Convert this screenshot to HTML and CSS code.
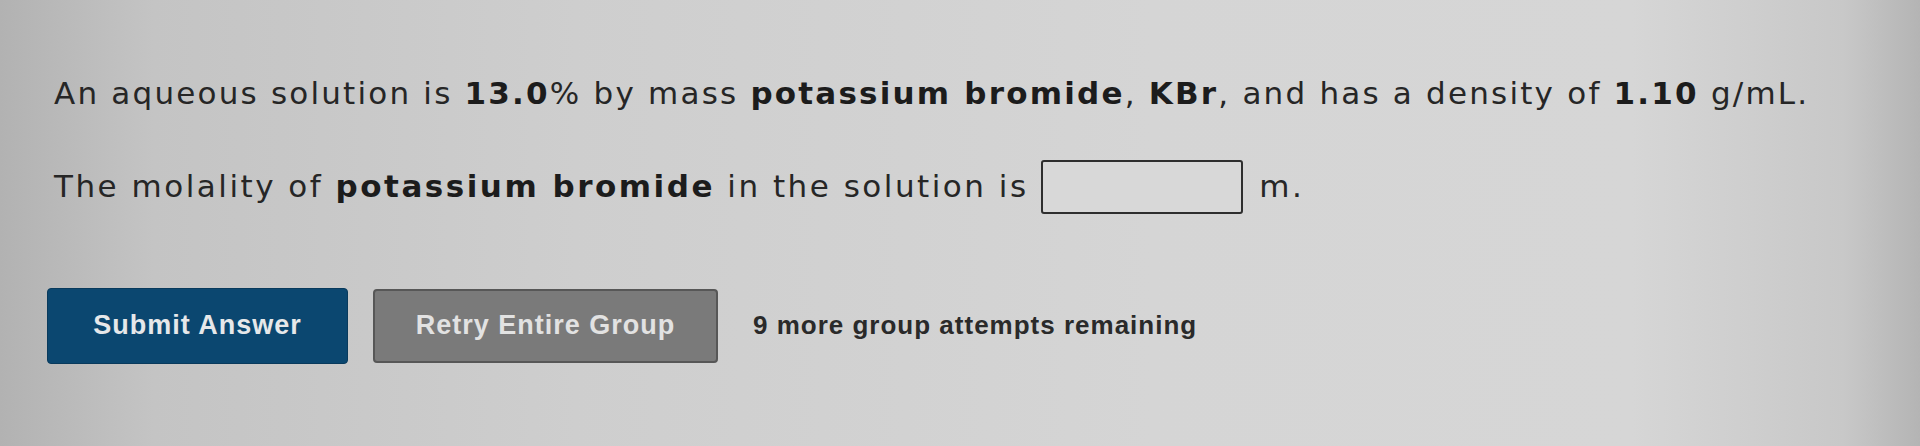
FILE: index.html
```html
<!DOCTYPE html>
<html>
<head>
<meta charset="utf-8">
<link rel="stylesheet" href="styles.css">
</head>
<body>
<div class="page">
  <p class="q q1">An aqueous solution is <b>13.0</b>% by mass <b>potassium bromide</b>, <b>KBr</b>, and has a density of <b>1.10</b> g/mL.</p>
  <p class="q q2">The molality of <b>potassium bromide</b> in the solution is <span class="answer"></span> m.</p>
  <div class="actions">
    <button class="btn submit">Submit Answer</button>
    <button class="btn retry">Retry Entire Group</button>
    <span class="remaining">9 more group attempts remaining</span>
  </div>
</div>
</body>
</html>
```
FILE: styles.css
```css
html, body {
  margin: 0;
  padding: 0;
  width: 1920px;
  height: 446px;
  overflow: hidden;
}
body {
  background: linear-gradient(90deg, #b2b2b2 0%, #c4c4c4 8%, #cecece 30%, #d5d5d5 60%, #d6d6d6 85%, #c8c8c8 96%, #b4b4b4 100%);
  font-family: "DejaVu Sans", Verdana, sans-serif;
  color: #262626;
}
.page {
  padding: 70px 0 0 54px;
}
.q {
  margin: 0;
  font-size: 31px;
  letter-spacing: 2.2px;
  line-height: 46px;
  white-space: nowrap;
}
.q b {
  color: #1c1c1c;
}
.q2 {
  margin-top: 47px;
  letter-spacing: 2.5px;
}
.answer {
  display: inline-block;
  vertical-align: middle;
  width: 198px;
  height: 50px;
  border: 2px solid #2e2e2e;
  border-radius: 3px;
  background: #d8d8d8;
  margin: -4px 4px 0 0;
}
.actions {
  margin-top: 74px;
  margin-left: -7px;
  display: flex;
  align-items: center;
  gap: 25px;
}
.btn {
  font-family: "Liberation Sans", Arial, sans-serif;
  font-weight: bold;
  font-size: 27px;
  height: 76px;
  border-radius: 4px;
  padding: 0;
  letter-spacing: 1px;
}
.submit {
  width: 301px;
  background: #0b4770;
  color: #e6e8ea;
  border: 1px solid #093a5c;
}
.retry {
  width: 345px;
  height: 74px;
  background: #7a7a7a;
  color: #e2e2e2;
  border: 2px solid #575757;
}
.remaining {
  margin-left: 10px;
  font-family: "Liberation Sans", Arial, sans-serif;
  font-weight: bold;
  font-size: 26px;
  letter-spacing: 1px;
  color: #2a2a2a;
}
```
